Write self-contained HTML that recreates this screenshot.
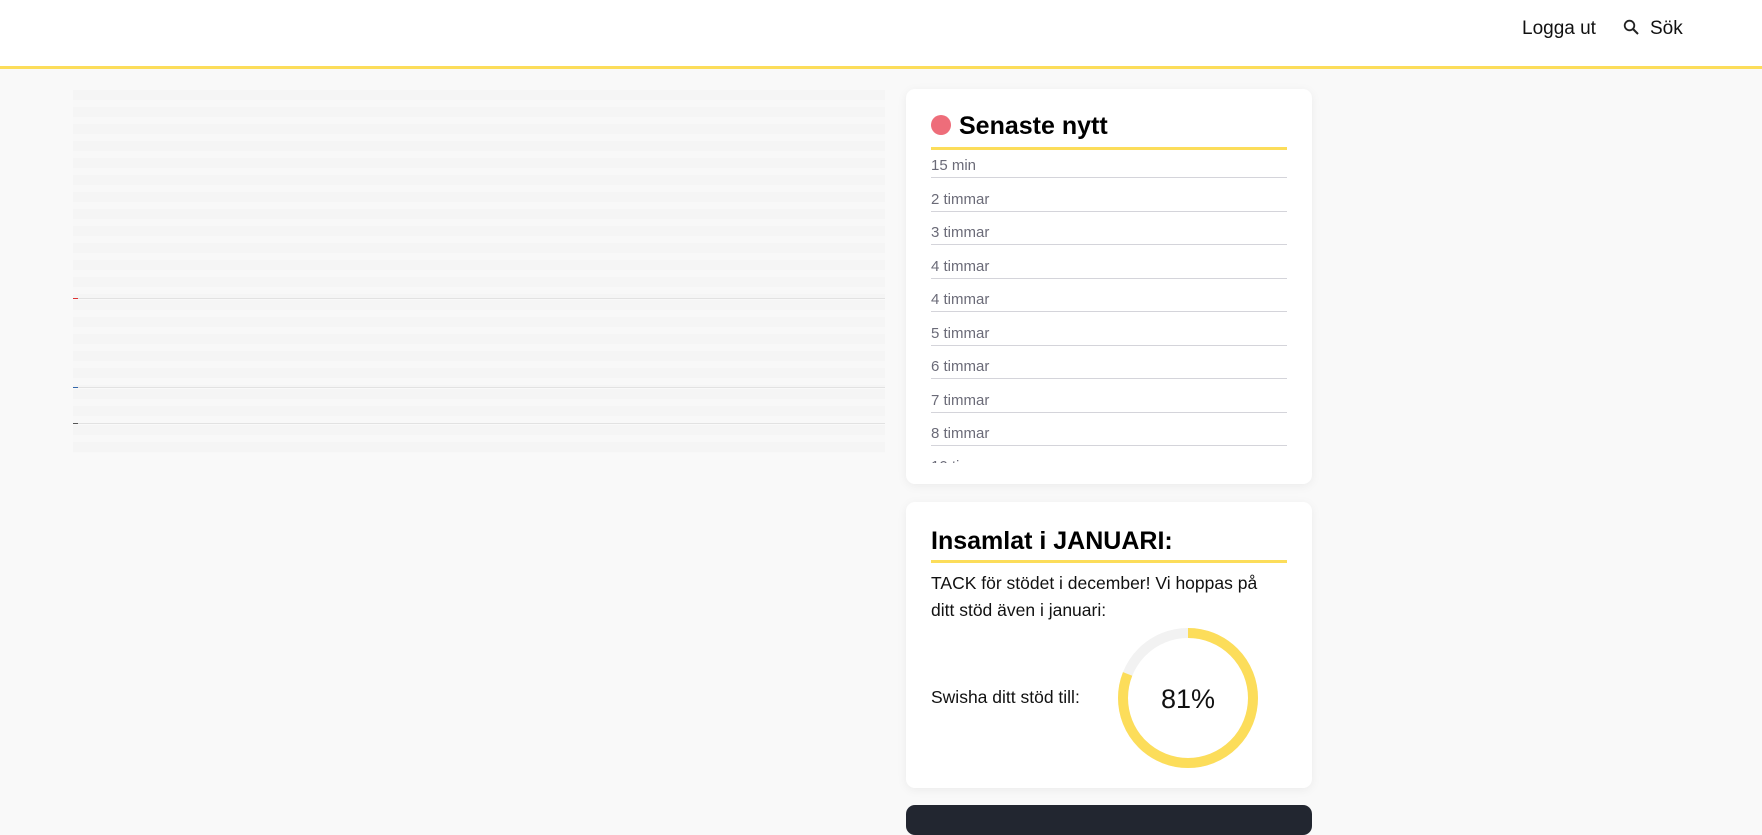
<!DOCTYPE html>
<html><head><meta charset="utf-8"><style>
*{box-sizing:border-box;margin:0;padding:0}
body{width:1762px;height:813px;overflow:hidden;background:#f9f9f9;font-family:"Liberation Sans",sans-serif;position:relative;color:#111}
.hdr{position:absolute;left:0;top:0;width:1762px;height:69px;background:#fff;border-bottom:3px solid #fcdd5a}
.nav{position:absolute;top:18px;font-size:19px;color:#111}
.card{position:absolute;left:906px;width:406px;background:#fff;border-radius:9px;box-shadow:0 2px 10px rgba(0,0,0,.06)}
.h{font-weight:bold;font-size:25px;color:#000;position:absolute;left:25px}
.yl{position:absolute;left:25px;width:356px;height:3px;background:#fcdd5a}
.row{position:absolute;left:25px;width:356px;height:1px;background:#d4d4da}
.rt{position:absolute;left:25px;font-size:15px;color:#6b6b78}
.sk{position:absolute;left:73px;width:812px;background:repeating-linear-gradient(#f5f5f5 0 10px,#f8f8f8 10px 17px)}
</style></head><body>
<div class="hdr">
<div class="nav" style="left:1522px">Logga ut</div>
<svg style="position:absolute;left:1623px;top:19px" width="17" height="17" viewBox="0 0 17 17"><circle cx="6.5" cy="6.5" r="4.8" fill="none" stroke="#222" stroke-width="1.8"/><line x1="10" y1="10" x2="15" y2="15" stroke="#222" stroke-width="2"/></svg>
<div class="nav" style="left:1650px">Sök</div>
</div>
<div class="sk" style="top:90px;height:208px"></div>
<div style="position:absolute;left:73px;top:298px;width:812px;height:1px;background:#e2e2e2"></div>
<div style="position:absolute;left:73px;top:298px;width:5px;height:1px;background:#d33"></div>
<div class="sk" style="top:300px;height:87px"></div>
<div style="position:absolute;left:73px;top:387px;width:812px;height:1px;background:#e2e2e2"></div>
<div style="position:absolute;left:73px;top:387px;width:5px;height:1px;background:#36a"></div>
<div class="sk" style="top:389px;height:34px"></div>
<div style="position:absolute;left:73px;top:423px;width:812px;height:1px;background:#e2e2e2"></div>
<div style="position:absolute;left:73px;top:423px;width:5px;height:1px;background:#555"></div>
<div class="sk" style="top:425px;height:28px"></div>

<div class="card" style="top:89px;height:395px">
<div style="position:absolute;left:25px;top:26px;width:20px;height:20px;border-radius:50%;background:#ee6d7a"></div>
<div class="h" style="left:53px;top:23px">Senaste nytt</div>
<div class="yl" style="top:58px"></div>
<div class="rt" style="top:68px">15 min</div><div class="row" style="top:88px"></div>
<div class="rt" style="top:102px">2 timmar</div><div class="row" style="top:122px"></div>
<div class="rt" style="top:135px">3 timmar</div><div class="row" style="top:155px"></div>
<div class="rt" style="top:169px">4 timmar</div><div class="row" style="top:189px"></div>
<div class="rt" style="top:202px">4 timmar</div><div class="row" style="top:222px"></div>
<div class="rt" style="top:236px">5 timmar</div><div class="row" style="top:256px"></div>
<div class="rt" style="top:269px">6 timmar</div><div class="row" style="top:289px"></div>
<div class="rt" style="top:303px">7 timmar</div><div class="row" style="top:323px"></div>
<div class="rt" style="top:336px">8 timmar</div><div class="row" style="top:356px"></div>
<div style="position:absolute;left:25px;top:369px;height:5px;overflow:hidden;width:100px"><div class="rt" style="left:0;top:0">10 timmar</div></div>
</div>

<div class="card" style="top:502px;height:286px">
<div class="h" style="top:25px">Insamlat i JANUARI:</div>
<div class="yl" style="top:58px"></div>
<div style="position:absolute;left:25px;top:68px;width:340px;font-size:17.5px;line-height:27px;color:#111">TACK för stödet i december! Vi hoppas på ditt stöd även i januari:</div>
<div style="position:absolute;left:25px;top:185px;font-size:17.5px;color:#111">Swisha ditt stöd till:</div>
<svg style="position:absolute;left:212px;top:126px" width="140" height="140" viewBox="0 0 140 140">
<circle cx="70" cy="70" r="65" fill="none" stroke="#f2f2f2" stroke-width="10"/>
<circle cx="70" cy="70" r="65" fill="none" stroke="#fcdd5a" stroke-width="10" stroke-dasharray="330.8 408.4" transform="rotate(-90 70 70)"/>
<text x="70" y="80" text-anchor="middle" font-size="27" font-family="Liberation Sans" fill="#111">81%</text>
</svg>
</div>
<div style="position:absolute;left:906px;top:805px;width:406px;height:30px;background:#222630;border-radius:9px"></div>
</body></html>
